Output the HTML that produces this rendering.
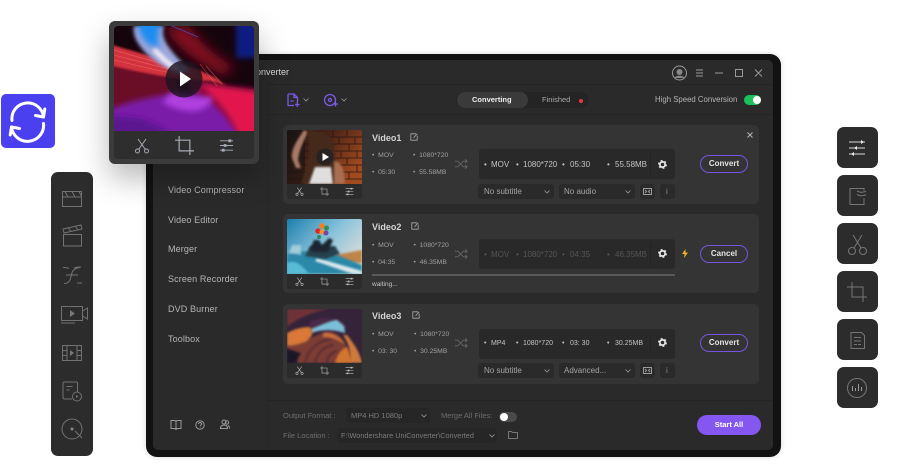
<!DOCTYPE html>
<html><head><meta charset="utf-8">
<style>
html,body{margin:0;padding:0;background:#fff}
body{width:902px;height:473px;position:relative;overflow:hidden;font-family:"Liberation Sans",sans-serif;color:#ccc}
.a,.t{position:absolute}
.t{white-space:nowrap;line-height:12px}
svg{position:absolute;overflow:visible}
.ic{fill:none;stroke:#9a9a9a;stroke-width:1}
.card{position:absolute;left:283px;width:476px;height:79px;background:#343434;border-radius:5px}
.bar{position:absolute;left:287px;width:75px;height:15px;background:#2b2b2b;border-radius:0 0 3px 3px}
.fmt{position:absolute;left:479px;width:196px;height:30px;background:#292929;border-radius:3px}
.dd{position:absolute;height:15px;background:#2a2a2a;border-radius:3px}
.btn{position:absolute;left:700px;width:46px;height:16px;border:1.5px solid #7754e0;border-radius:10px;color:#e4e4e4;font-size:8px;font-weight:bold;text-align:center;line-height:16px}
.tile{position:absolute;left:837px;width:41px;height:41px;background:#2c2c2c;border-radius:7px}
.nav{font-size:9px;color:#b5b5b5;left:168px;letter-spacing:.13px}
.meta{font-size:6.8px;color:#a0a0a0}
.f{font-size:8px;color:#c4c4c4}
.g{font-size:8px;color:#555}
.s{font-size:7px;color:#c4c4c4}
.title{font-size:9px;font-weight:bold;color:#d4d4d4}
.fo{font-size:7.5px;color:#6e6e6e}
</style></head>
<body>
<svg width="0" height="0" style="position:absolute">
<defs>
<symbol id="sc" viewBox="0 0 16 16" overflow="visible"><g fill="none" stroke="currentColor" stroke-width="1"><circle cx="3.5" cy="13" r="2"/><circle cx="12.5" cy="13" r="2"/><path d="M4.7 11.4 12 1M11.3 11.4 4 1"/></g></symbol>
<symbol id="cr" viewBox="0 0 16 16" overflow="visible"><g fill="none" stroke="currentColor" stroke-width="1"><path d="M3.5 0v12.5H16M0 3.5h12.5V16"/></g></symbol>
<symbol id="sl" viewBox="0 0 16 16" overflow="visible"><g fill="none" stroke="currentColor" stroke-width="1"><path d="M1 3h14M1 8h14M1 13h14"/></g><path d="M10 1.5h3v3h-3zM5 6.5h3v3H5zM3 11.5h3v3H3z" fill="currentColor"/></symbol>
<symbol id="pen" viewBox="0 0 10 10" overflow="visible"><g fill="none" stroke="#aaa" stroke-width="1"><path d="M7.5 1H1v8h8V3.5M4.5 6 9 1"/></g></symbol>
<symbol id="shuf" viewBox="0 0 14 10" overflow="visible"><g fill="none" stroke="#666" stroke-width="1"><path d="M0 2h3l6 6h4M0 8h3l6-6h4M11 0l2 2-2 2M11 6l2 2-2 2"/></g></symbol>
<symbol id="gear" viewBox="0 0 10 10" overflow="visible"><circle cx="5" cy="5" r="2.9" fill="none" stroke="#e8e8e8" stroke-width="1.9"/><circle cx="5" cy="5" r="4.3" fill="none" stroke="#e8e8e8" stroke-width="1.3" stroke-dasharray="2.2 2.3"/></symbol>
<symbol id="chev" viewBox="0 0 6 4" overflow="visible"><path d="M.5.5 3 3 5.500.5" fill="none" stroke="#999" stroke-width=".8"/></symbol>
<linearGradient id="wall" x1="0" y1="0" x2="1" y2=".6"><stop offset="0" stop-color="#1e1513"/><stop offset=".45" stop-color="#4a2216"/><stop offset="1" stop-color="#a04a20"/></linearGradient>
<linearGradient id="sky" x1="0" y1="0" x2="1" y2=".7"><stop offset="0" stop-color="#1b7fae"/><stop offset=".55" stop-color="#8cc4dc"/><stop offset="1" stop-color="#dcdcd8"/></linearGradient>
<filter id="b1" x="-20%" y="-20%" width="140%" height="140%"><feGaussianBlur stdDeviation="1"/></filter>
<filter id="b15" x="-20%" y="-20%" width="140%" height="140%"><feGaussianBlur stdDeviation="1.8"/></filter>
<filter id="b2" x="-30%" y="-30%" width="160%" height="160%"><feGaussianBlur stdDeviation="3"/></filter>
<filter id="b5" x="-40%" y="-40%" width="180%" height="180%"><feGaussianBlur stdDeviation="6"/></filter>
</defs>
</svg>

<!-- window -->
<div class="a" style="left:146px;top:54px;width:635px;height:403px;background:#121212;border-radius:11px;box-shadow:0 0 6px rgba(0,0,0,.15)"></div>
<div class="a" style="left:153px;top:60px;width:620px;height:390px;background:#2a2a2a;border-radius:5px"></div>
<div class="a" style="left:267px;top:85px;width:1px;height:365px;background:#262626"></div>
<div class="a" style="left:267px;top:84px;width:506px;height:1px;background:#242424"></div>
<div class="a" style="left:267px;top:114px;width:506px;height:1px;background:#242424"></div>
<div class="a" style="left:267px;top:400px;width:506px;height:1px;background:#242424"></div>

<div class="t" style="left:256px;top:66px;font-size:9px;color:#d8d8d8">onverter</div>

<div class="t nav" style="top:184px">Video Compressor</div>
<div class="t nav" style="top:214px">Video Editor</div>
<div class="t nav" style="top:243px">Merger</div>
<div class="t nav" style="top:273px">Screen Recorder</div>
<div class="t nav" style="top:303px">DVD Burner</div>
<div class="t nav" style="top:333px">Toolbox</div>

<svg style="left:170px;top:419px" width="60" height="12" class="ic"><path d="M1 1.500h4l1 1 1-1h4v8H7l-1 1-1-1H1zM6 2.500v7"/><circle cx="30" cy="6" r="4.200"/><path d="M28.600 5c0-2 3-2 3 0 0 1-1.400 1-1.400 2.300M30.200 8v.5"/><circle cx="54" cy="3" r="2"/><circle cx="57" cy="3.500" r="1.700"/><path d="M50.500 9.500c0-2.500 1.500-3.500 3.500-3.500s3.500 1 3.500 3.500zM58 6.500c1 .5 1.500 1.500 1.500 3"/></svg>

<!-- toolbar -->
<svg style="left:287px;top:93px" width="60" height="15" fill="none" stroke="#7a5ae6" stroke-width="1.300"><path d="M1 1h6l3.500 3.500V9M7 1v3.500h3.500M1 1v11.500h6M3.500 8h3M8 11.500h4.500M10.250 9v5"/><circle cx="43" cy="7" r="5.500"/><circle cx="43" cy="7" r="1.500"/><path d="M46 11h5M48.500 8.500v5"/></svg>
<svg style="left:303px;top:98px" width="6" height="4"><use href="#chev"/></svg>
<svg style="left:341px;top:98px" width="6" height="4"><use href="#chev"/></svg>

<div class="a" style="left:456px;top:92px;width:133px;height:16px;background:#242424;border-radius:8px"></div>
<div class="a" style="left:457px;top:92px;width:71px;height:16px;background:#3a3a3a;border-radius:8px"></div>
<div class="t" style="left:472px;top:94px;font-size:7.500px;font-weight:bold;color:#eee">Converting</div>
<div class="t" style="left:542px;top:94px;font-size:7.500px;color:#aaa">Finished</div>
<div class="a" style="left:579px;top:99px;width:4px;height:4px;border-radius:50%;background:#e83a3a"></div>
<div class="t" style="left:655px;top:94px;font-size:7.800px;color:#b5b5b5">High Speed Conversion</div>
<div class="a" style="left:744px;top:95px;width:17px;height:10px;border-radius:5px;background:#1fc05c"></div>
<div class="a" style="left:753px;top:96px;width:8px;height:8px;border-radius:50%;background:#fff"></div>

<svg style="left:672px;top:66px" width="92" height="15" fill="none" stroke="#9a9a9a" stroke-width="1"><circle cx="7.500" cy="7" r="7"/><circle cx="7.500" cy="6" r="3" fill="#888" stroke="none"/><path d="M2.500 12c1-3 9-3 10 0" fill="#888" stroke="none"/><path d="M24 4h7M24 7h7M24 10h7M43 7h8M63.500 3.500h7v7h-7zM83 3.500l7 7M90 3.500l-7 7"/></svg>

<!-- cards -->
<div class="card" style="top:125px"></div>
<div class="card" style="top:214px"></div>
<div class="card" style="top:303.500px;height:80px"></div>

<svg style="left:746.500px;top:131.500px" width="6" height="6"><path d="M.5.500l5 5M5.500.500l-5 5" stroke="#bbb" stroke-width=".9"/></svg>

<!-- thumb 1 -->
<svg style="left:287px;top:130px;border-radius:2px 2px 0 0;overflow:hidden" width="75" height="54" viewBox="0 0 75 54">
<rect width="75" height="54" fill="url(#wall)"/>
<g stroke="#241512" stroke-width="1" opacity=".75"><path d="M0 7h75M0 14h75M0 21h75M0 28h75M0 35h75M0 42h75M0 49h75"/><path d="M46 0v7M60 0v7M52 7v7M68 7v7M46 14v7M62 14v7M54 21v7M70 21v7M60 28v7M70 35v7M62 42v7"/></g>
<rect width="18" height="54" fill="#1a1412" opacity=".65"/>
<path d="M5 28 C4 18 12 8 17 0 L21 2 C17 10 12 20 11 30 L14 38 L9 38z" fill="#a87a66" filter="url(#b1)"/>
<path d="M20 0 C38 0 48 8 47 20 C50 32 50 44 48 54 H14 C18 40 24 28 22 14z" fill="#45291c" filter="url(#b1)"/>
<path d="M22 54 L28 37 H44 L46 54z" fill="#dedede" filter="url(#b1)"/>
<path d="M47 31 C55 31 58 42 58 54 H47z" fill="#a86e50" filter="url(#b1)"/>
<circle cx="38" cy="27" r="8.500" fill="#222" opacity=".82"/><path d="M35.500 23l6.500 4-6.500 4z" fill="#fff"/>
</svg>
<!-- thumb 2 -->
<svg style="left:287px;top:219px;border-radius:2px 2px 0 0;overflow:hidden" width="75" height="55" viewBox="0 0 75 55">
<rect width="75" height="55" fill="url(#sky)"/>
<path d="M48 36 L75 31 V44 L55 44z" fill="#c08448" filter="url(#b1)"/>
<path d="M0 36 C10 30 30 32 50 36 L75 46 V55 H0z" fill="#2b88a8" filter="url(#b1)"/>
<path d="M0 44 C10 40 16 48 22 55 H0z" fill="#56bcd4" filter="url(#b1)"/>
<path d="M30 39 L75 52 V55 H66 L28 42z" fill="#dce8ec" filter="url(#b1)"/>
<path d="M18 37 L23 27 H48 L53 35 L38 40z" fill="#28404c" filter="url(#b1)"/>
<path d="M23 30 L27 21 H32 L35 26 L42 19 L46 21 L41 33 H25z" fill="#1c2832" filter="url(#b1)"/>
<path d="M2 34 L5 26 H14 L14 36z" fill="#b4d4dc" opacity=".8" filter="url(#b1)"/>
<circle cx="31" cy="12" r="2.800" fill="#e12828"/><circle cx="35" cy="7" r="2.800" fill="#f08020"/><circle cx="39.500" cy="9" r="2.500" fill="#2f8e58"/><circle cx="35" cy="13" r="2.500" fill="#f5932d"/><circle cx="39" cy="14" r="2.500" fill="#7248a0"/><circle cx="32" cy="18" r="2" fill="#2a8a60"/>
</svg>
<!-- thumb 3 -->
<svg style="left:287px;top:308.500px;border-radius:2px 2px 0 0;overflow:hidden" width="75" height="54" viewBox="0 0 75 54">
<rect width="75" height="54" fill="#35233a"/>
<path d="M0 0H42C26 3 12 8 0 18z" fill="#6e3038" filter="url(#b1)"/>
<path d="M22 13 C30 9 44 8 52 11 C58 14 60 18 58 24 L24 20z" fill="#4a2a48" filter="url(#b1)"/>
<path d="M0 37 C12 35 24 28 36 24 C50 20 60 30 64 54 H10 C12 46 6 42 0 40z" fill="#7c3e34" filter="url(#b1)"/>
<g stroke="#43242e" stroke-width="1.200" fill="none" filter="url(#b1)"><path d="M18 54C20 42 30 32 44 30M28 54C30 44 36 38 46 36M40 54C40 48 44 44 50 42"/></g>
<path d="M24 20 C32 17 42 12 50 11 L57 17 L58 24 C46 20 36 20 24 24z" fill="#7abfd8" filter="url(#b1)"/>
<path d="M0 24 C8 20 14 18 23 18 C28 24 24 28 20 32 C14 35 6 37 0 37z" fill="#d97838" filter="url(#b1)"/>
<path d="M36 24 C44 22 54 28 58 36 C50 30 44 28 36 28z" fill="#c8703c" filter="url(#b1)"/>
<path d="M48 54 C50 46 54 40 60 38 C62 42 64 48 64 54z" fill="#d2742e" filter="url(#b1)"/>
<path d="M56 26 C62 34 64 44 63 54 H75 C73 44 68 36 60 26z" fill="#e88a3c" filter="url(#b1)" opacity=".85"/>
<path d="M0 40 L14 44 L8 54 H0z" fill="#1c1626" filter="url(#b1)"/>
</svg>

<div class="bar" style="top:184px"></div>
<div class="bar" style="top:274px"></div>
<div class="bar" style="top:363px"></div>

<svg style="left:295px;top:187px;color:#bdbdbd" width="9" height="9"><use href="#sc" width="9" height="9"/></svg>
<svg style="left:320px;top:187px;color:#bdbdbd" width="9" height="9"><use href="#cr" width="9" height="9"/></svg>
<svg style="left:345px;top:187px;color:#bdbdbd" width="9" height="9"><use href="#sl" width="9" height="9"/></svg>
<svg style="left:295px;top:277px;color:#bdbdbd" width="9" height="9"><use href="#sc" width="9" height="9"/></svg>
<svg style="left:320px;top:277px;color:#bdbdbd" width="9" height="9"><use href="#cr" width="9" height="9"/></svg>
<svg style="left:345px;top:277px;color:#bdbdbd" width="9" height="9"><use href="#sl" width="9" height="9"/></svg>
<svg style="left:295px;top:366px;color:#bdbdbd" width="9" height="9"><use href="#sc" width="9" height="9"/></svg>
<svg style="left:320px;top:366px;color:#bdbdbd" width="9" height="9"><use href="#cr" width="9" height="9"/></svg>
<svg style="left:345px;top:366px;color:#bdbdbd" width="9" height="9"><use href="#sl" width="9" height="9"/></svg>

<!-- card 1 -->
<div class="t title" style="left:372px;top:131.500px">Video1</div>
<svg style="left:410px;top:133px" width="8" height="8"><use href="#pen" width="8" height="8"/></svg>
<div class="t meta" style="left:372px;top:150px">•&nbsp; MOV</div>
<div class="t meta" style="left:413px;top:150px">•&nbsp; 1080*720</div>
<div class="t meta" style="left:372px;top:167px">•&nbsp; 05:30</div>
<div class="t meta" style="left:413px;top:167px">•&nbsp; 55.58MB</div>
<svg style="left:455px;top:159px" width="13" height="10"><use href="#shuf" width="13" height="10"/></svg>
<div class="fmt" style="top:149px"></div>
<div class="t f" style="left:484px;top:159px">•</div><div class="t f" style="left:491px;top:159px">MOV</div><div class="t f" style="left:516px;top:159px">•</div><div class="t f" style="left:523px;top:159px">1080*720</div><div class="t f" style="left:562px;top:159px">•</div><div class="t f" style="left:570px;top:159px">05:30</div><div class="t f" style="left:607px;top:159px">•</div><div class="t f" style="left:615px;top:159px">55.58MB</div>
<div class="a" style="left:650px;top:153px;width:1px;height:22px;background:#232323"></div>
<svg style="left:658px;top:160px" width="9" height="9"><use href="#gear" width="9" height="9"/></svg>
<div class="btn" style="top:155px">Convert</div>
<div class="dd" style="left:478px;top:184px;width:76px"></div>
<div class="dd" style="left:559px;top:184px;width:76px"></div>
<div class="dd" style="left:640px;top:184px;width:15px"></div>
<div class="dd" style="left:660px;top:184px;width:15px"></div>
<div class="t f" style="left:484px;top:186px;color:#a5a5a5">No subtitle</div>
<div class="t f" style="left:564px;top:186px;color:#a5a5a5">No audio</div>
<svg style="left:544px;top:190px" width="6" height="4"><use href="#chev"/></svg>
<svg style="left:625px;top:190px" width="6" height="4"><use href="#chev"/></svg>
<svg style="left:643px;top:188px" width="9" height="8" class="ic"><path d="M.5.500h8v6h-8zM2 2l1.500 1.500L2 5M7 2 5.500 3.500 7 5"/></svg>
<div class="t" style="left:666px;top:186px;font-size:8px;color:#888">i</div>

<!-- card 2 -->
<div class="t title" style="left:372px;top:220.500px">Video2</div>
<svg style="left:411px;top:222px" width="8" height="8"><use href="#pen" width="8" height="8"/></svg>
<div class="t meta" style="left:372px;top:240px">•&nbsp; MOV</div>
<div class="t meta" style="left:413.500px;top:240px">•&nbsp; 1080*720</div>
<div class="t meta" style="left:372px;top:257px">•&nbsp; 04:35</div>
<div class="t meta" style="left:413.500px;top:257px">•&nbsp; 46.35MB</div>
<svg style="left:455px;top:249px" width="13" height="10"><use href="#shuf" width="13" height="10"/></svg>
<div class="fmt" style="top:239px"></div>
<div class="t g" style="left:484px;top:248.500px">•</div><div class="t g" style="left:491px;top:248.500px">MOV</div><div class="t g" style="left:516px;top:248.500px">•</div><div class="t g" style="left:523px;top:248.500px">1080*720</div><div class="t g" style="left:562px;top:248.500px">•</div><div class="t g" style="left:570px;top:248.500px">04:35</div><div class="t g" style="left:607px;top:248.500px">•</div><div class="t g" style="left:615px;top:248.500px">46.35MB</div>
<div class="a" style="left:650px;top:243px;width:1px;height:22px;background:#232323"></div>
<svg style="left:658px;top:249px" width="9" height="9"><use href="#gear" width="9" height="9"/></svg>
<svg style="left:682px;top:249px" width="6" height="9"><path d="M3.500 0 0 5h2.500L2 9l4-5.500H3.500z" fill="#eab126"/></svg>
<div class="btn" style="top:244.500px">Cancel</div>
<div class="a" style="left:372px;top:274px;width:303px;height:2px;background:#5a5a5a"></div>
<div class="t" style="left:372px;top:279px;font-size:6.500px;color:#c5c5c5">waiting...</div>

<!-- card 3 -->
<div class="t title" style="left:372px;top:310px">Video3</div>
<svg style="left:412px;top:311px" width="8" height="8"><use href="#pen" width="8" height="8"/></svg>
<div class="t meta" style="left:372px;top:329px">•&nbsp; MOV</div>
<div class="t meta" style="left:414px;top:329px">•&nbsp; 1080*720</div>
<div class="t meta" style="left:372px;top:346px">•&nbsp; 03: 30</div>
<div class="t meta" style="left:414px;top:346px">•&nbsp; 30.25MB</div>
<svg style="left:455px;top:338px" width="13" height="10"><use href="#shuf" width="13" height="10"/></svg>
<div class="fmt" style="top:328.500px"></div>
<div class="t s" style="left:484px;top:338px">•</div><div class="t s" style="left:491px;top:338px">MP4</div><div class="t s" style="left:516px;top:338px">•</div><div class="t s" style="left:523px;top:338px">1080*720</div><div class="t s" style="left:562px;top:338px">•</div><div class="t s" style="left:570px;top:338px">03: 30</div><div class="t s" style="left:607px;top:338px">•</div><div class="t s" style="left:615px;top:338px">30.25MB</div>
<div class="a" style="left:650px;top:333px;width:1px;height:22px;background:#232323"></div>
<svg style="left:658px;top:338px" width="9" height="9"><use href="#gear" width="9" height="9"/></svg>
<div class="btn" style="top:333.500px">Convert</div>
<div class="dd" style="left:478px;top:363px;width:76px"></div>
<div class="dd" style="left:559px;top:363px;width:76px"></div>
<div class="dd" style="left:640px;top:363px;width:15px"></div>
<div class="dd" style="left:660px;top:363px;width:15px"></div>
<div class="t f" style="left:484px;top:365px;color:#a5a5a5">No subtitle</div>
<div class="t f" style="left:564px;top:365px;color:#a5a5a5">Advanced...</div>
<svg style="left:544px;top:369px" width="6" height="4"><use href="#chev"/></svg>
<svg style="left:625px;top:369px" width="6" height="4"><use href="#chev"/></svg>
<svg style="left:643px;top:367px" width="9" height="8" class="ic"><path d="M.5.500h8v6h-8zM2 2l1.500 1.500L2 5M7 2 5.500 3.500 7 5"/></svg>
<div class="t" style="left:666px;top:365px;font-size:8px;color:#888">i</div>

<!-- footer -->
<div class="t fo" style="left:283px;top:410px">Output Format :</div>
<div class="dd" style="left:346px;top:408px;width:84px;height:15px;background:#262626"></div>
<div class="t" style="left:351px;top:410px;font-size:7.500px;color:#7c7c7c">MP4 HD 1080p</div>
<svg style="left:421px;top:414px" width="6" height="4"><use href="#chev"/></svg>
<div class="t fo" style="left:441px;top:410px">Merge All Files:</div>
<div class="a" style="left:499px;top:412px;width:18px;height:10px;border-radius:5px;background:#4a4a4a"></div>
<div class="a" style="left:500px;top:413px;width:8px;height:8px;border-radius:50%;background:#fff"></div>
<div class="t fo" style="left:283px;top:430px">File Location :</div>
<div class="dd" style="left:337px;top:428px;width:160px;height:15px;background:#262626"></div>
<div class="t" style="left:341px;top:430px;font-size:7.300px;color:#7c7c7c">F:\Wondershare UniConverter\Converted</div>
<svg style="left:489px;top:434px" width="6" height="4"><use href="#chev"/></svg>
<svg style="left:508px;top:431px" width="10" height="8" fill="none" stroke="#777" stroke-width="1"><path d="M.5 7.500V.5h3l1 1h5v6z"/></svg>
<div class="a" style="left:697px;top:414.500px;width:64px;height:20px;border-radius:10px;background:#8457f0;color:#fff;font-size:7.500px;font-weight:bold;text-align:center;line-height:20px">Start All</div>

<!-- popup -->
<div class="a" style="left:109px;top:21px;width:150px;height:143px;background:#3b3b3b;border-radius:6px;box-shadow:0 14px 30px rgba(0,0,0,.28)"></div>
<div class="a" style="left:114px;top:26px;width:140px;height:133px;background:#2e2e2e;border-radius:4px"></div>
<svg style="left:114px;top:26px;border-radius:4px 4px 0 0;overflow:hidden" width="140" height="105" viewBox="0 0 140 105">
<rect width="140" height="105" fill="#16040c"/>
<rect x="122" y="-6" width="24" height="38" fill="#0a1a80" filter="url(#b2)"/>
<path d="M50 0 C60 20 80 34 110 50 L120 40 C100 30 85 15 75 0z" fill="#8a0a22" filter="url(#b5)"/>
<path d="M-6 38H60L70 84H-6z" fill="#6a0a26" filter="url(#b2)"/>
<path d="M70 50 L112 60 L146 64 V112 H100z" fill="#8a1040" filter="url(#b2)"/>
<path d="M-8 84 C25 72 50 68 78 66 C98 74 116 92 128 114 H-8z" fill="#7a1ca8" filter="url(#b2)"/>
<path d="M-8 92 C20 88 45 94 60 114 H-8z" fill="#5c1490" filter="url(#b2)"/>
<path d="M58 66C72 72 86 72 100 70 94 88 72 90 48 76z" fill="#b040e0" filter="url(#b2)"/>
<path d="M86 58 L146 66 V112 H126 C118 90 102 72 86 58z" fill="#e2124e" filter="url(#b2)"/>
<path d="M-2 19 C30 28 55 36 78 41 L102 52 L112 60 C100 55 92 54 84 55 C55 52 25 46 -2 40z" fill="#d4303c" filter="url(#b1)"/>
<g stroke="#f29a88" stroke-width=".6" opacity=".5" fill="none"><path d="M0 24 C30 33 55 40 80 44M0 29 C30 37 55 44 82 47M0 34 C30 41 50 47 84 51"/><path d="M86 38 L103 60M92 40 L108 58"/></g>
<path d="M20 0 H50 C46 10 52 22 76 44 L66 48 C50 42 34 32 26 20 C20 12 19 5 20 0z" fill="#9aa6dc" filter="url(#b15)"/>
<path d="M24 -6 H48 C44 6 42 14 46 22 L34 18 C28 12 24 5 24 -6z" fill="#1c8cf0" filter="url(#b2)"/>
<path d="M42 22 C50 30 60 40 72 46 L60 44 C50 38 42 30 38 24z" fill="#f0e8f4" filter="url(#b15)"/>
<path d="M58 0 L84 11" stroke="#4c48b8" stroke-width=".8" fill="none"/>
<circle cx="70" cy="53" r="18.500" fill="#1c1420" opacity=".82"/>
<path d="M66 45.500 L77 53 66 60.500z" fill="#fff"/>
</svg>
<svg style="left:134px;top:138px;color:#a5aab4" width="16" height="16"><use href="#sc" width="16" height="16"/></svg>
<svg style="left:175px;top:136px;color:#a5aab4" width="19" height="19"><use href="#cr" width="19" height="19"/></svg>
<svg style="left:219px;top:138px;color:#a5aab4" width="15" height="15"><use href="#sl" width="15" height="15"/></svg>

<!-- blue tile -->
<div class="a" style="left:1px;top:94px;width:54px;height:54px;background:#4a40ef;border-radius:5px"></div>
<svg style="left:9px;top:104px" width="36" height="36" fill="none" stroke="#fff" stroke-width="3" stroke-linecap="round" stroke-linejoin="round"><path d="M3 16.500A15.750 15.750 0 0 1 34.500 13M34.500 19.500A15.750 15.750 0 0 1 2.500 23"/><path d="M35.800 5 34.500 13 26.500 11.500M1.200 31 2.500 23 10.500 24.500"/></svg>

<!-- left bar -->
<div class="a" style="left:51px;top:172px;width:42px;height:284px;background:#2c2c2c;border-radius:7px"></div>
<svg style="left:51px;top:172px" width="42" height="284" fill="none" stroke="#727272" stroke-width="1">
<path d="M11.500 19.500h19v15h-19zM11.500 25h19M14 19.500l3 5.500M21 19.500l3 5.500M28 19.500l2 4"/>
<path d="M12.500 62.500h18v11.500h-18zM12 57l18-4 1 4-18 4zM17 55.500l3 4M24 54l3 4"/>
<path d="M12 95.500c3 0 4 0 6 1M23 96c3-1 5-1 7-1M13 111.500c4 0 6-2 7-7 1-5 2-8 9-9M15 103h12M26 111h5"/>
<path d="M10.500 134.500h21v14h-21zM10 151h14M31.500 139l5-3v11l-5-3"/><path d="M19 138l5 3.500-5 3.500z" fill="#777" stroke="none"/>
<path d="M11.500 173.500h19v15h-19zM16 173.500v15M26 173.500v15M11.500 178.500h4.500M11.500 183.500h4.500M26 178.500h4.500M26 183.500h4.500"/><path d="M19 178l4 3-4 3z" fill="#777" stroke="none"/>
<path d="M21 227H13.500q-1.500 0-1.500-1.500v-14q0-1.500 1.500-1.500h11.500q1.500 0 1.500 1.500v8M15.500 214.500h6M15.500 218h3"/><circle cx="26" cy="224.500" r="4.500"/><path d="M25 223l2.500 1.500-2.500 1.500z" fill="#777" stroke="none"/>
<circle cx="21" cy="257" r="10"/><circle cx="21" cy="257" r="1.500" fill="#888" stroke="none"/><path d="M24 259l7 7"/>
</svg>

<!-- right tiles -->
<div class="tile" style="top:127px"></div>
<div class="tile" style="top:175px"></div>
<div class="tile" style="top:223px"></div>
<div class="tile" style="top:271px"></div>
<div class="tile" style="top:319px"></div>
<div class="tile" style="top:367px"></div>
<svg style="left:837px;top:127px" width="41" height="281" fill="none" stroke="#767676" stroke-width="1">
<g stroke="#d8d8d8"><path d="M12 15h16M12 21h16M12 27h16"/></g>
<path d="M24 13l3 2-3 2zM20 19l-3 2 3 2zM17 25l-3 2 3 2z" fill="#e8e8e8" stroke="none"/>
<path d="M27 71v6.500H13V61.500h14v2M20 64c2 1 4 2 6 1 1 0 2 0 3-1M20 67.500c2 1 4 2 6 1 1 0 2 0 3-1"/>
<circle cx="15" cy="124" r="3.500"/><circle cx="26" cy="124" r="3.500"/><path d="M17 121 25 108M24 121 16 108"/>
<path d="M15 155v15h15M10 160h16v15"/>
<path d="M14 205.500h10.500l3 3v13H14zM17 210.500h7M17 214h7M17 217.500h3M21 217.500h3"/>
<circle cx="20" cy="261" r="9.500"/><path d="M15.500 259v5M18.500 261v3M21.500 257v7M24.500 260v4" stroke="#999"/>
</svg>
</body></html>
